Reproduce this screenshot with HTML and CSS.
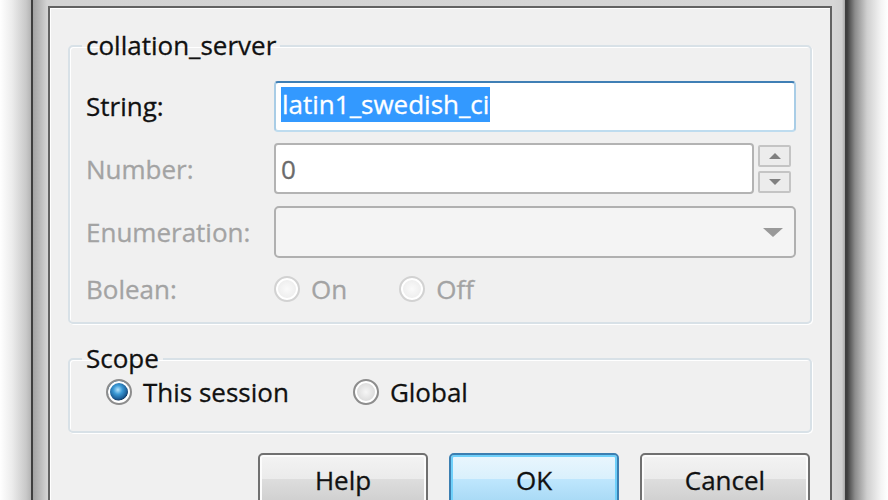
FILE: index.html
```html
<!DOCTYPE html>
<html>
  <head>
    <meta charset="utf-8"/>
    <title>collation_server</title>
    <link rel="stylesheet" href="styles.css">
  </head>
  <body>
    <div class="shade-left"></div>
    <div class="frame">
      <div class="client">
        <fieldset class="group">
          <legend>collation_server</legend>
          <div class="rows">
            <label class="label">String:</label>
            <div class="field focus"><span class="sel">latin1_swedish_ci</span></div>

            <label class="label off">Number:</label>
            <div class="spin">
              <div class="field num">0</div>
              <div class="spin-btns">
                <div class="spin-btn"><span class="tri up"></span></div>
                <div class="spin-btn"><span class="tri down"></span></div>
              </div>
            </div>

            <label class="label off">Enumeration:</label>
            <div class="combo"><span class="tri big"></span></div>

            <label class="label off">Bolean:</label>
            <div class="radios">
              <span class="opt off"><span class="radio dis"></span>On</span>
              <span class="opt off"><span class="radio dis"></span>Off</span>
            </div>
          </div>
        </fieldset>

        <fieldset class="group scope">
          <legend>Scope</legend>
          <div class="radios">
            <span class="opt"><span class="radio checked"></span>This session</span>
            <span class="opt"><span class="radio"></span>Global</span>
          </div>
        </fieldset>

        <div class="buttons">
          <button class="btn">Help</button>
          <button class="btn default">OK</button>
          <button class="btn">Cancel</button>
        </div>
      </div>
    </div>
    <div class="shade-right"></div>
  </body>
</html>
```

FILE: styles.css
```css
html, body{
  margin: 0;
  height: 500px;
  overflow: hidden;
  background: #fff;
}
body{
  display: flex;
  font-family: "Open Sans", "Noto Sans", sans-serif;
  font-size: 26px;
  color: #111;
  -webkit-text-stroke: 0.3px;
}
.shade-left{
  width: 31px;
  background: linear-gradient(to right, #fff 0, #ececec 12px, #c9c9c9 26px, #b4b4b4 31px);
}
.shade-right{
  flex: 1;
  background: linear-gradient(to right, #3e3e3e 0, #8c8c8c 8px, #cfcfcf 20px, #f4f4f4 34px, #fff 41px);
}
.frame{
  width: 812px;
  border-left: 2px solid #3f3f3f;
  border-right: 2px solid #3f3f3f;
  padding: 6px 13px 0 15px;
  background: linear-gradient(to right, #a3a3a3 0, #bdbdbd 8px, #d3d3d3 14px, #d6d6d6 calc(100% - 12px), #d0d0d0 calc(100% - 3px), #a6a6a6 100%);
  box-sizing: border-box;
  flex: 0 0 816px;
}
.client{
  height: 100%;
  border: 2px solid #626262;
  border-bottom: 0;
  background: #f0f0f0;
  box-shadow: inset 1px 1px 0 #fff;
  padding: 0 18px 0 18px;
}
.group{
  margin: 20px 0 0 0;
  padding: 17px 14px 13px 16px;
  border: 2px solid #d8e1e7;
  border-radius: 5px;
  box-shadow: inset 1px 1px 0 #fff, 1px 1px 0 #fff;
}
.group legend{
  padding: 0 4px;
  margin-left: -4px;
  line-height: 35px;
}
.rows{
  display: grid;
  grid-template-columns: 188px 1fr;
  grid-template-rows: 52px 52px 52px 40px;
  row-gap: 11px;
  align-items: center;
}
.label.off, .opt.off{
  color: #a3a3a3;
}
.field{
  height: 51px;
  box-sizing: border-box;
  border: 2px solid #b3b3b3;
  border-radius: 4px;
  background: #fff;
  padding: 0 5px;
  display: flex;
  align-items: center;
}
.field.focus{
  border-color: #3f7fb5 #a9cde6 #bedcef #a9cde6;
}
.sel{
  background: #3399ff;
  color: #fff;
  line-height: 35px;
  padding: 0 1px;
  margin-bottom: 3px;
}
.num{
  flex: 1;
  color: #6b6b6b;
}
.spin{
  display: flex;
  gap: 4px;
  height: 52px;
  margin-right: 5px;
}
.spin-btns{
  display: flex;
  flex-direction: column;
  gap: 4px;
  padding: 2px 0;
  width: 33px;
}
.spin-btn{
  flex: 1;
  border: 2px solid #c4c4c4;
  border-radius: 2px;
  background: #ececec;
  display: flex;
  align-items: center;
  justify-content: center;
}
.tri{
  width: 0;
  height: 0;
  border-left: 6px solid transparent;
  border-right: 6px solid transparent;
  -webkit-text-stroke: 0;
}
.tri.up{
  border-bottom: 6px solid #808080;
}
.tri.down{
  border-top: 6px solid #808080;
}
.combo{
  height: 52px;
  box-sizing: border-box;
  border: 2px solid #b0b0b0;
  border-radius: 5px;
  background: #f4f4f4;
  display: flex;
  align-items: center;
  justify-content: flex-end;
  padding-right: 11px;
}
.tri.big{
  border-left-width: 10px;
  border-right-width: 10px;
  border-top: 9px solid #999;
}
.radios{
  display: flex;
  align-items: center;
}
.opt{
  display: inline-flex;
  align-items: center;
  gap: 11px;
  margin-right: 52px;
}
.radio{
  width: 26px;
  height: 26px;
  box-sizing: border-box;
  border-radius: 50%;
  border: 2px solid #8d8d8d;
  background: radial-gradient(circle at 50% 50%, #f6f6f6 0, #dedede 55%, #c9c9c9 75%);
  box-shadow: inset 0 0 0 2px #fff;
}
.radio.dis{
  border-color: #d2d2d2;
  background: radial-gradient(circle at 50% 50%, #fafafa 0, #ececec 70%);
}
.radio.checked{
  background: radial-gradient(circle at 45% 40%, #b6e3fb 0, #3c9ad6 25%, #1d5f98 50%, #173f6a 58%, #f4f4f4 62%, #e1e1e1 100%);
}
.scope{
  margin-top: 17px;
  padding: 0 14px 21px 36px;
}
.scope legend{
  margin-left: -24px;
  margin-bottom: -2px;
}
.scope .opt{
  margin-right: 64px;
}
.buttons{
  display: flex;
  justify-content: flex-end;
  gap: 21px;
  margin-top: 20px;
  padding-right: 2px;
}
.btn{
  width: 170px;
  height: 52px;
  font: inherit;
  color: #111;
  border: 2px solid #707070;
  border-radius: 5px;
  padding: 2px 0 0 0;
  background: linear-gradient(to bottom, #f3f3f3 0, #ebebeb 50%, #dddddd 51%, #cfcfcf 100%);
  box-shadow: inset 0 0 0 2px #fcfcfc;
}
.btn.default{
  border-color: #3c7fb1;
  background: linear-gradient(to bottom, #eaf6fd 0, #d9f0fc 50%, #bee6fd 51%, #a7d9f5 100%);
  box-shadow: inset 0 0 0 2px #6fd0fa;
}
```
